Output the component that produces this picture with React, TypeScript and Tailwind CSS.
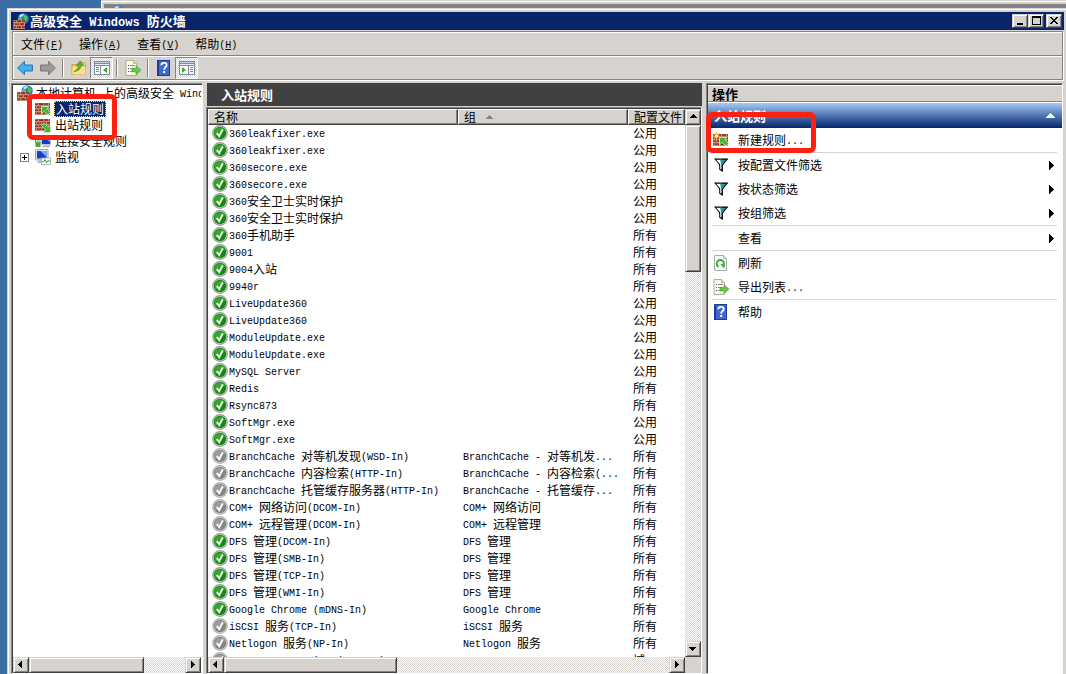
import React from "react";

const RAISED =
  "border border-[#d6d3ce] border-r-[#424142] border-b-[#424142] bg-[#d6d3ce] shadow-[inset_1px_1px_#fff,inset_-1px_-1px_#848284]";
const SUNKEN =
  "border border-[#848284] border-r-white border-b-white shadow-[inset_1px_1px_#424142]";
const TRACK =
  "bg-[repeating-conic-gradient(#d6d3ce_0_25%,#fff_0_50%)] bg-[length:2px_2px]";

/** Chinese text at the inherited size, with half-width runs in a monospaced face. */
function Mixed({ text, bold = false }: { text: string; bold?: boolean }) {
  const runs = text.match(/[\x20-\x7e]+|[^\x20-\x7e]+/g) ?? [];
  return (
    <>
      {runs.map((run, i) =>
        /^[\x20-\x7e]/.test(run) ? (
          <span
            key={i}
            className={
              bold
                ? "font-['Liberation_Mono',monospace] text-[12px] leading-none whitespace-pre"
                : "align-[1px] font-['Liberation_Mono',monospace] text-[10px] leading-none whitespace-pre"
            }
          >
            {run}
          </span>
        ) : (
          <span key={i}>{run}</span>
        ),
      )}
    </>
  );
}

function Svg({ children }: { children: React.ReactNode }) {
  return (
    <svg viewBox="0 0 16 16" className="size-4 shrink-0" aria-hidden="true">
      {children}
    </svg>
  );
}

function Bricks({ x, y, w, h }: { x: number; y: number; w: number; h: number }) {
  const rows = Math.floor(h / 3);
  return (
    <g shapeRendering="crispEdges">
      <rect x={x} y={y} width={w} height={h} fill="#99402c" />
      {Array.from({ length: rows }, (_, r) => (
        <g key={r}>
          <rect x={x} y={y + r * 3 + 2} width={w} height="1" fill="#c48a78" />
          {Array.from({ length: 4 }, (_, c) => {
            const bx = x + c * 5 + (r % 2 ? 1 : 3);
            return bx < x + w ? (
              <rect key={c} x={bx} y={y + r * 3} width="1" height="2" fill="#c48a78" />
            ) : null;
          })}
          <rect x={x + (r % 2 ? 3 : 0)} y={y + r * 3} width="2" height="1" fill="#b8604a" />
          <rect x={x + (r % 2 ? 8 : 6)} y={y + r * 3 + 1} width="2" height="1" fill="#74281a" />
        </g>
      ))}
    </g>
  );
}

function FirewallIcon() {
  return (
    <Svg>
      <circle cx="10.2" cy="5.8" r="5.6" fill="#2379d0" />
      <path d="M6 3 Q8 0.5 11 0.7 L10 3 L7.5 4.5 Z" fill="#bfe6ff" />
      <path d="M11 1.5 L14 3 L14.8 6 L12.5 8.5 L10.5 5.5 Z" fill="#4fc04a" />
      <path d="M6 4 L8.5 4.5 L9 7 L5 7 Z" fill="#63c85c" />
      <Bricks x={0} y={7} w={12} h={9} />
    </Svg>
  );
}

function RuleIcon({ kind }: { kind: "in" | "out" | "new" }) {
  return (
    <Svg>
      <Bricks x={0} y={2} w={15} h={12} />
      {kind === "out" ? (
        <path
          d="M15.5 15.5 V8 L13.4 10.1 L9.2 5.9 L6.4 8.7 L10.6 12.9 L8 15.5 Z"
          fill="#45b534"
          stroke="#c9efbd"
          strokeWidth="0.9"
        />
      ) : (
        <path
          d="M6.5 5.5 H14 L11.9 7.6 L15.6 11.3 L12.8 14.1 L9.1 10.4 L6.5 13 Z"
          fill="#45b534"
          stroke="#c9efbd"
          strokeWidth="0.9"
        />
      )}
      {kind === "new" && (
        <g>
          <path d="M3.5 0 V8 M0 4 H7.5 M1 1.5 L6.2 6.7 M6.2 1.5 L1 6.7" stroke="#ff9a1c" strokeWidth="1" />
          <circle cx="3.6" cy="4" r="1.8" fill="#fff3a0" />
        </g>
      )}
    </Svg>
  );
}

function ConnectionIcon() {
  return (
    <Svg>
      <rect x="0.5" y="3.5" width="7" height="6" fill="#d8d8d8" stroke="#888" />
      <rect x="6.5" y="3.5" width="9" height="8" fill="#123fc0" stroke="#b9c3d4" />
      <path d="M9 4 L15 4 L15 9 Z" fill="#6ea3ef" />
      <path d="M7 14 H15 V12.5 H8.5 Z" fill="#9aa3b0" />
      <rect x="0.5" y="9" width="5" height="5" fill="#4aa348" />
      <rect x="2" y="6.5" width="2.4" height="3" fill="#8fd38a" />
    </Svg>
  );
}

function MonitorIcon() {
  return (
    <Svg>
      <rect x="0.5" y="0.5" width="12.5" height="10.5" rx="0.8" fill="#e1e5ea" stroke="#9aa3b0" />
      <rect x="2" y="2" width="9.5" height="7.5" fill="#1640c4" />
      <path d="M5.5 2 H11.5 V8 Z" fill="#7bacf2" />
      <path d="M4 11 H8 L8 14 H2 Z" fill="#b7bdc7" />
      <rect x="6.5" y="9" width="9" height="6.5" fill="#fff" stroke="#8fa3bd" strokeWidth="0.8" />
      <path d="M7.2 12.8 L8.8 12.8 L10 10.5 L11.5 14 L13 11.5 L15 12.5" fill="none" stroke="#2faa2f" strokeWidth="1" />
    </Svg>
  );
}

function FunnelIcon() {
  return (
    <Svg>
      <path d="M1 1.5 H15.5 L10 8 V14.5 H8.8 L6.2 12.4 V8 Z" fill="#000" />
      <path d="M3 2.8 H9 L8 5.5 L8.2 12.6 L7.2 12 V7.4 Z" fill="#fff" />
      <path d="M7.2 2.8 H13.2 L9 7.8 V13 L8 12.4 V7 Z" fill="#1b9a9c" />
    </Svg>
  );
}

function RefreshIcon() {
  return (
    <Svg>
      <path d="M1.5 0.5 H10.5 L13.5 3.5 V15.5 H1.5 Z" fill="#f7f9f7" stroke="#a8b1a8" />
      <path d="M10.5 0.5 V3.5 H13.5" fill="#d4dcd4" stroke="#a8b1a8" strokeWidth="0.7" />
      <path d="M5.4 11.6 A3.6 3.6 0 1 1 10 11" fill="none" stroke="#35ae35" strokeWidth="1.9" />
      <path d="M7.3 9.2 L12 9 L11.2 13.4 Z" fill="#35ae35" />
    </Svg>
  );
}

function ExportIcon() {
  return (
    <Svg>
      <path d="M1 0.5 H8.5 L11.5 3.5 V15.5 H1 Z" fill="#fdf9df" stroke="#aaa58b" strokeWidth="0.9" />
      <path d="M8.5 0.5 V3.5 H11.5" fill="#e5e0bc" stroke="#aaa58b" strokeWidth="0.7" />
      <g shapeRendering="crispEdges">
        <path d="M3 5.5 H4 M3 8.5 H4 M3 11.5 H4" stroke="#3f54a8" strokeWidth="1" />
        <path d="M5 5.5 H10 M5 8.5 H9 M5 11.5 H9" stroke="#8a8da0" strokeWidth="1" />
      </g>
      <path d="M7 8.6 H11 V5.8 L16 10.2 L11 14.6 V11.8 H7 Z" fill="#63cb45" stroke="#3c9a2c" strokeWidth="0.6" />
    </Svg>
  );
}

function HelpIcon() {
  return (
    <Svg>
      <rect x="1" y="0" width="13" height="16" fill="#1d3c9e" />
      <rect x="3" y="1" width="10" height="14" fill="#3f68cf" />
      <path d="M5.3 5.2 Q5.4 2.8 8 2.8 Q10.7 2.8 10.7 5.1 Q10.7 6.6 9.2 7.4 Q8.2 8 8.2 9.8" fill="none" stroke="#fff" strokeWidth="1.8" />
      <rect x="7.2" y="11" width="2" height="2" fill="#fff" />
    </Svg>
  );
}

function ArrowIcon({ back = false }: { back?: boolean }) {
  return (
    <Svg>
      {back ? (
        <path d="M0.6 8 L7.4 1.4 V5 H15.4 V11 H7.4 V14.6 Z" fill="#45b0ee" stroke="#1f72b8" strokeWidth="1" />
      ) : (
        <path d="M15.4 8 L8.6 1.4 V5 H0.6 V11 H8.6 V14.6 Z" fill="#9b9b9b" stroke="#727272" strokeWidth="1" />
      )}
    </Svg>
  );
}

function FolderUpIcon() {
  return (
    <Svg>
      <path d="M1 4.5 H8 L9 2.5 H13.5 L14.5 4.5 V14.5 H1 Z" fill="#f3cf68" stroke="#c49a3c" strokeWidth="0.8" />
      <path d="M1.5 7 H14.5 V14.5 H1.5 Z" fill="#fbe08e" />
      <path d="M3 11.5 Q7 10 7.6 5.5 L5.2 5.5 L9.2 0.8 L12.6 5.5 L10.2 5.5 Q9.6 11 3 11.5 Z" fill="#5bb531" stroke="#358519" strokeWidth="0.6" />
    </Svg>
  );
}

function PaneIcon({ side }: { side: "left" | "right" }) {
  const left = side === "left";
  return (
    <Svg>
      <g shapeRendering="crispEdges">
        <rect x="0" y="1" width="16" height="14" fill="#7d8ba1" />
        <rect x="1" y="2" width="14" height="1" fill="#c6d2e3" />
        <rect x="1" y="4" width="14" height="1" fill="#e6ecf4" />
        <rect x="1" y="6" width={left ? 5 : 8} height="8" fill="#fff" />
        <rect x={left ? 7 : 10} y="6" width={left ? 8 : 5} height="8" fill="#fff" />
        <path
          d={left ? "M2 7.5 H5 M2 9.5 H5 M2 11.5 H5" : "M11 7.5 H14 M11 9.5 H14 M11 11.5 H14"}
          stroke="#6d8bb8"
          strokeWidth="1"
        />
      </g>
      <path d={left ? "M13 7 V13 L9 10 Z" : "M3 7 V13 L7 10 Z"} fill="#38a832" />
    </Svg>
  );
}

function StatusIcon({ on }: { on: boolean }) {
  return (
    <svg viewBox="0 0 16 16" className="size-4 shrink-0" role="img" aria-label={on ? "已启用" : "已禁用"}>
      <circle cx="8" cy="8" r="7.9" fill={on ? "#9c9c9c" : "#b3b3b3"} />
      <circle cx="8" cy="8" r="6.7" fill={on ? "#cfe0cc" : "#dadada"} />
      <circle cx="8" cy="8" r="6.2" fill={on ? "#128a10" : "#858585"} />
      <path d="M2.6 8 A5.4 5.4 0 0 1 13 6 Q9 6 7 9 Q5 11 3.4 10.6 Z" fill={on ? "#35a828" : "#9c9c9c"} />
      <path d="M4.8 8 L7.2 11.2 L10.8 4.4" fill="none" stroke="#fff" strokeWidth="1.8" />
    </svg>
  );
}

type Direction = "up" | "down" | "left" | "right";
const GLYPHS: Record<Direction, string> = {
  up: "M4 8 h7 v-1 h-1 v-1 h-1 v-1 h-1 v-1 h-1 v1 h-1 v1 h-1 v1 h-1 z",
  down: "M3 5 h7 v1 h-1 v1 h-1 v1 h-1 v1 h-1 v-1 h-1 v-1 h-1 v-1 h-1 z",
  left: "M8 3 v7 h-1 v-1 h-1 v-1 h-1 v-1 h-1 v-1 h1 v-1 h1 v-1 h1 v-1 z",
  right: "M5 3 v7 h1 v-1 h1 v-1 h1 v-1 h1 v-1 h-1 v-1 h-1 v-1 h-1 v-1 z",
};

function ScrollButton({ dir, label }: { dir: Direction; label: string }) {
  return (
    <button type="button" aria-label={label} className={`flex size-4 shrink-0 items-center justify-center ${RAISED}`}>
      <svg viewBox="0 0 14 14" className="size-[14px]" shapeRendering="crispEdges" aria-hidden="true">
        <path d={GLYPHS[dir]} fill="#000" />
      </svg>
    </button>
  );
}

function HorizontalScroll({ thumb }: { thumb: string }) {
  return (
    <div className={`flex h-4 min-w-0 flex-1 ${TRACK}`}>
      <ScrollButton dir="left" label="向左滚动" />
      <div className="min-w-0 flex-1">
        <div className={`h-4 ${thumb} ${RAISED}`} />
      </div>
      <ScrollButton dir="right" label="向右滚动" />
    </div>
  );
}

type Rule = [name: string, group: string, profile: string, on: boolean];
const RULES: Rule[] = [
  ["360leakfixer.exe", "", "公用", true],
  ["360leakfixer.exe", "", "公用", true],
  ["360secore.exe", "", "公用", true],
  ["360secore.exe", "", "公用", true],
  ["360安全卫士实时保护", "", "公用", true],
  ["360安全卫士实时保护", "", "公用", true],
  ["360手机助手", "", "所有", true],
  ["9001", "", "所有", true],
  ["9004入站", "", "所有", true],
  ["9940r", "", "所有", true],
  ["LiveUpdate360", "", "公用", true],
  ["LiveUpdate360", "", "公用", true],
  ["ModuleUpdate.exe", "", "公用", true],
  ["ModuleUpdate.exe", "", "公用", true],
  ["MySQL Server", "", "公用", true],
  ["Redis", "", "所有", true],
  ["Rsync873", "", "所有", true],
  ["SoftMgr.exe", "", "公用", true],
  ["SoftMgr.exe", "", "公用", true],
  ["BranchCache 对等机发现(WSD-In)", "BranchCache - 对等机发...", "所有", false],
  ["BranchCache 内容检索(HTTP-In)", "BranchCache - 内容检索(...", "所有", false],
  ["BranchCache 托管缓存服务器(HTTP-In)", "BranchCache - 托管缓存...", "所有", false],
  ["COM+ 网络访问(DCOM-In)", "COM+ 网络访问", "所有", false],
  ["COM+ 远程管理(DCOM-In)", "COM+ 远程管理", "所有", false],
  ["DFS 管理(DCOM-In)", "DFS 管理", "所有", true],
  ["DFS 管理(SMB-In)", "DFS 管理", "所有", true],
  ["DFS 管理(TCP-In)", "DFS 管理", "所有", true],
  ["DFS 管理(WMI-In)", "DFS 管理", "所有", true],
  ["Google Chrome (mDNS-In)", "Google Chrome", "所有", true],
  ["iSCSI 服务(TCP-In)", "iSCSI 服务", "所有", false],
  ["Netlogon 服务(NP-In)", "Netlogon 服务", "所有", false],
  ["SNMP Trap Service (UDP In)", "SNMP Trap", "域", false],
];

const MENUS = [
  ["文件", "F"],
  ["操作", "A"],
  ["查看", "V"],
  ["帮助", "H"],
];

function BackWindow() {
  return (
    <div className="ml-[101px] flex h-2 shrink-0 flex-col overflow-hidden bg-[#d6d3ce] pl-[3px] shadow-[inset_0_1px_#d6d3ce,inset_1px_2px_#fff]">
      <div className="mt-1 flex h-[18px] shrink-0 items-center bg-[#848284] pl-1">
        <FirewallIcon />
      </div>
    </div>
  );
}

function TitleBar() {
  const button = `flex h-[14px] w-4 items-center justify-center ${RAISED}`;
  return (
    <header className="flex h-[18px] shrink-0 items-center bg-[#08246b] pr-[2px] pl-[2px] text-white">
      <FirewallIcon />
      <h1 className="ml-px flex-1 truncate text-[13px] leading-[18px] font-bold">
        <Mixed text="高级安全 Windows 防火墙" bold />
      </h1>
      <button type="button" aria-label="最小化" className={button}>
        <svg viewBox="0 0 12 12" className="size-3" shapeRendering="crispEdges" aria-hidden="true">
          <rect x="3" y="8" width="6" height="2" fill="#000" />
        </svg>
      </button>
      <button type="button" aria-label="最大化" className={button}>
        <svg viewBox="0 0 12 12" className="size-3" shapeRendering="crispEdges" aria-hidden="true">
          <path d="M2 1 H11 V10 H2 Z M3 3 V9 H10 V3 Z" fill="#000" fillRule="evenodd" />
        </svg>
      </button>
      <button type="button" aria-label="关闭" className={`ml-[2px] ${button}`}>
        <svg viewBox="0 0 12 12" className="size-3" shapeRendering="crispEdges" aria-hidden="true">
          <path
            d="M2 2h2v1h1v1h2v-1h1v-1h2v1h-1v1h-1v1h-1v1h1v1h1v1h1v1h-2v-1h-1v-1h-2v1h-1v1h-2v-1h1v-1h1v-1h1v-1h-1v-1h-1v-1h-1z"
            fill="#000"
          />
        </svg>
      </button>
    </header>
  );
}

function Divider() {
  return <div className="mx-[3px] h-[18px] w-[2px] border-r border-l border-r-white border-l-[#848284]" />;
}

function ToolButton({ label, pressed = false, children }: { label: string; pressed?: boolean; children: React.ReactNode }) {
  return (
    <button
      type="button"
      aria-label={label}
      className={
        pressed
          ? `flex h-[22px] w-[23px] items-center justify-center border border-[#848284] border-r-white border-b-white ${TRACK}`
          : "flex h-[22px] w-[23px] items-center justify-center"
      }
    >
      {children}
    </button>
  );
}

function Bars() {
  return (
    <div className="mx-px mt-px flex shrink-0 flex-col border border-[#848284] shadow-[inset_1px_1px_#fff,1px_1px_#fff]">
      <nav aria-label="菜单" className="flex h-6 items-center gap-4 border-b border-[#848284] pl-2">
        {MENUS.map(([name, key]) => (
          <button key={key} type="button" className="text-[12px] leading-4">
            {name}
            <span className="align-[1px] font-['Liberation_Mono',monospace] text-[10px] leading-none">
              (<u>{key}</u>)
            </span>
          </button>
        ))}
      </nav>
      <div role="toolbar" aria-label="工具栏" className="flex h-[23px] items-center border-t border-white">
        <ToolButton label="后退"><ArrowIcon back /></ToolButton>
        <ToolButton label="前进"><ArrowIcon /></ToolButton>
        <Divider />
        <ToolButton label="向上"><FolderUpIcon /></ToolButton>
        <ToolButton label="显示控制台树" pressed><PaneIcon side="left" /></ToolButton>
        <Divider />
        <ToolButton label="导出列表"><ExportIcon /></ToolButton>
        <Divider />
        <ToolButton label="帮助"><HelpIcon /></ToolButton>
        <ToolButton label="显示操作窗格" pressed><PaneIcon side="right" /></ToolButton>
      </div>
    </div>
  );
}

function TreePane() {
  return (
    <aside className={`relative flex w-[192px] shrink-0 flex-col bg-white px-px pt-px ${SUNKEN}`}>
      <ul className="flex-1 overflow-hidden text-[12px] leading-4 whitespace-nowrap">
        <li>
          <div className="flex h-4 items-center gap-[3px] pl-1">
            <FirewallIcon />
            <span className="min-w-0 flex-1 overflow-hidden"><Mixed text="本地计算机 上的高级安全 Windows" /></span>
          </div>
          <ul>
            <li className="flex h-4 items-center gap-[3px] pl-[22px]">
              <RuleIcon kind="in" />
              <span className="border border-dotted border-[#f7db94] bg-[#08246b] px-px leading-[14px] text-white">入站规则</span>
            </li>
            <li className="flex h-4 items-center gap-[3px] pl-[22px]">
              <RuleIcon kind="out" />
              <span className="px-px">出站规则</span>
            </li>
            <li className="flex h-4 items-center gap-[3px] pl-[22px]">
              <ConnectionIcon />
              <span className="px-px">连接安全规则</span>
            </li>
            <li className="flex h-4 items-center gap-[3px] pl-[7px]">
              <button type="button" aria-label="展开" className="mr-[3px] flex size-[9px] items-center justify-center border border-[#848284]">
                <svg viewBox="0 0 7 7" className="size-[7px]" shapeRendering="crispEdges" aria-hidden="true">
                  <path d="M1 3h2v-2h1v2h2v1h-2v2h-1v-2h-2z" fill="#000" />
                </svg>
              </button>
              <MonitorIcon />
              <span className="px-px">监视</span>
            </li>
          </ul>
        </li>
      </ul>
      <div className="flex">
        <HorizontalScroll thumb="w-[115px]" />
      </div>
      <div className="pointer-events-none absolute top-[10px] left-[15px] h-[46px] w-[90px] rounded-[6px] border-[5px] border-[#ff2010]" />
    </aside>
  );
}

function RulesPane() {
  const head = "h-4 truncate p-0 pl-[5px] text-left font-normal leading-[14px] border-t border-l border-white border-r border-r-[#424142] border-b border-b-[#424142] shadow-[inset_-1px_-1px_#848284]";
  return (
    <main className="mr-px flex min-w-0 flex-1 flex-col">
      <h2 className="ml-px flex h-[23px] shrink-0 items-center bg-[#424142] pl-[14px] text-[13px] leading-4 font-bold text-white">
        入站规则
      </h2>
      <div className={`mt-px flex min-h-0 flex-1 flex-col pt-px pl-px ${SUNKEN}`}>
        <div className="flex min-h-0 flex-1">
          <div className="min-w-0 flex-1 overflow-hidden bg-white">
            <table className="w-full table-fixed border-separate border-spacing-0 text-[12px]">
              <thead className="bg-[#d6d3ce]">
                <tr>
                  <th scope="col" className={`w-[250px] ${head}`}>名称</th>
                  <th scope="col" className={`w-[170px] ${head}`}>
                    组
                    <svg viewBox="0 0 7 4" className="ml-[10px] inline h-1 w-[7px] align-[3px]" shapeRendering="crispEdges" aria-hidden="true">
                      <path d="M0 4v-1h1v-1h1v-1h1v-1h1v1h1v1h1v1h1v1z" fill="#848284" />
                    </svg>
                  </th>
                  <th scope="col" className={head}>配置文件</th>
                </tr>
              </thead>
              <tbody>
                {RULES.map(([name, group, profile, on], i) => (
                  <tr key={i}>
                    <td className="h-[17px] overflow-hidden p-0 pl-1 whitespace-nowrap">
                      <div className="flex h-[17px] items-start gap-px">
                        <StatusIcon on={on} />
                        <span className="leading-4"><Mixed text={name} /></span>
                      </div>
                    </td>
                    <td className="h-[17px] overflow-hidden p-0 pl-[5px] whitespace-nowrap">
                      <div className="h-[17px] leading-4"><Mixed text={group} /></div>
                    </td>
                    <td className="h-[17px] overflow-hidden p-0 pl-[5px] whitespace-nowrap">
                      <div className="h-[17px] leading-4">{profile}</div>
                    </td>
                  </tr>
                ))}
              </tbody>
            </table>
          </div>
          <div className={`flex w-4 shrink-0 flex-col ${TRACK}`}>
            <ScrollButton dir="up" label="向上滚动" />
            <div className="min-h-0 flex-1">
              <div className={`h-[147px] w-4 ${RAISED}`} />
            </div>
            <ScrollButton dir="down" label="向下滚动" />
          </div>
        </div>
        <div className="flex shrink-0">
          <HorizontalScroll thumb="w-[173px]" />
          <div className="size-4 bg-[#d6d3ce]" />
        </div>
      </div>
    </main>
  );
}

function Action({ icon, label, submenu = false }: { icon?: React.ReactNode; label: string; submenu?: boolean }) {
  return (
    <button type="button" className="flex h-6 w-full items-center pr-[3px] pl-px text-left text-[12px] leading-4">
      <span className="mr-[9px] flex size-4 shrink-0">{icon}</span>
      <span className="flex-1"><Mixed text={label} /></span>
      {submenu && (
        <svg viewBox="0 0 5 9" className="h-[9px] w-[5px]" shapeRendering="crispEdges" aria-hidden="true">
          <path d="M0 0h1v1h1v1h1v1h1v1h1v1h-1v1h-1v1h-1v1h-1v1h-1z" fill="#000" />
        </svg>
      )}
    </button>
  );
}

function ActionsPane() {
  const rule = "border-b border-[#d6d3ce]";
  return (
    <aside className={`relative flex w-[357px] shrink-0 flex-col bg-white pt-px pl-px ${SUNKEN}`}>
      <h2 className="mt-px flex h-4 shrink-0 items-center border-b border-[#848284] bg-[#d6d3ce] pl-1 text-[13px] leading-4 font-bold">
        操作
      </h2>
      <div className="mt-px flex h-[25px] shrink-0 items-center justify-between bg-linear-to-b from-[#a5cbf7] to-[#08246b] pr-[7px] pl-[6px] text-[13px] leading-4 font-bold text-white">
        <h3>入站规则</h3>
        <svg viewBox="0 0 9 5" className="h-[5px] w-[9px]" shapeRendering="crispEdges" aria-hidden="true">
          <path d="M0 5v-1h1v-1h1v-1h1v-1h1v-1h1v1h1v1h1v1h1v1h1v1z" fill="#fff" />
        </svg>
      </div>
      <div className="flex flex-col pr-[5px] pl-1">
        <div className={rule}>
          <Action icon={<RuleIcon kind="new" />} label="新建规则..." />
        </div>
        <div className={rule}>
          <Action icon={<FunnelIcon />} label="按配置文件筛选" submenu />
          <Action icon={<FunnelIcon />} label="按状态筛选" submenu />
          <Action icon={<FunnelIcon />} label="按组筛选" submenu />
        </div>
        <div className={rule}>
          <Action label="查看" submenu />
        </div>
        <div className={rule}>
          <Action icon={<RefreshIcon />} label="刷新" />
          <Action icon={<ExportIcon />} label="导出列表..." />
        </div>
        <Action icon={<HelpIcon />} label="帮助" />
      </div>
      <div className="pointer-events-none absolute top-[28px] left-[-1px] h-[41px] w-[110px] rounded-[6px] border-[5px] border-[#ff2010]" />
    </aside>
  );
}

export default function App() {
  return (
    <div className="flex h-screen flex-col overflow-hidden bg-[#3a6ea5] font-['Noto_Sans_CJK_SC',sans-serif] text-black">
      <BackWindow />
      <div className="ml-[7px] flex min-h-0 flex-1 flex-col bg-[#d6d3ce] pt-1 pr-[2px] pl-1 shadow-[inset_1px_1px_#d6d3ce,inset_2px_2px_#fff]">
        <TitleBar />
        <Bars />
        <div className="mt-[3px] mr-px flex min-h-0 flex-1 gap-[3px]">
          <TreePane />
          <RulesPane />
          <ActionsPane />
        </div>
      </div>
    </div>
  );
}
